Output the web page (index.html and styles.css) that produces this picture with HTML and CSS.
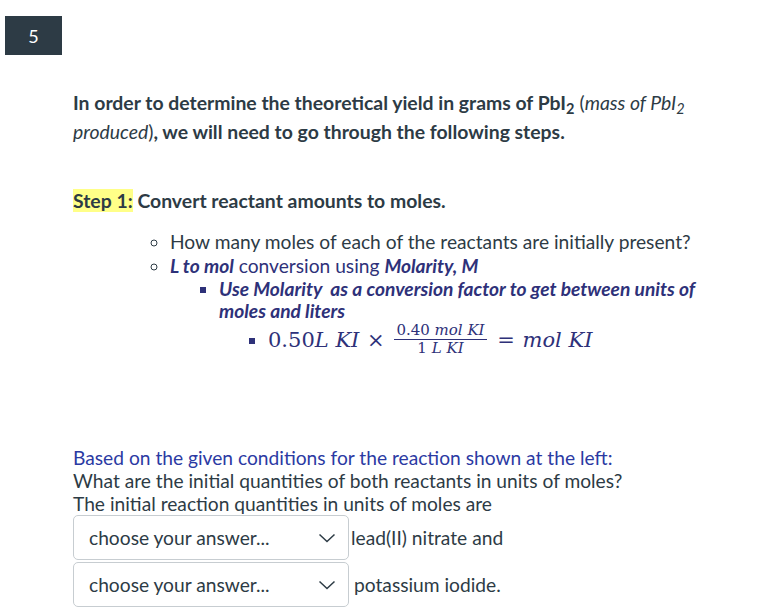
FILE: index.html
```html
<!DOCTYPE html>
<html>
<head>
<meta charset="utf-8">
<link rel="stylesheet" href="styles.css">
</head>
<body>
<div class="badge">5</div>
<div class="content">
  <p class="intro"><strong>In order to determine the theoretical yield in grams of PbI<sub>2</sub></strong> (<em>mass of PbI<sub>2</sub> produced</em>)<strong>, we will need to go through the following steps.</strong></p>
  <p class="step"><span class="hl">Step 1:</span> Convert reactant amounts to moles.</p>
  <ul class="l1">
    <li>How many moles of each of the reactants are initially present?</li>
    <li><strong class="navy"><em>L to mol</em></strong> <span class="navy">conversion using</span> <strong class="navy"><em>Molarity, M</em></strong>
      <ul class="l2">
        <li><strong><em>Use Molarity&nbsp; as a conversion factor to get between units of moles and liters</em></strong>
          <ul class="l3">
            <li><span class="math"><span class="rm">0.50</span><span class="it">L</span> <span class="it">KI</span> <span class="op">×</span> <span class="frac"><span class="num"><span class="rm">0.40</span> <span class="it">mol</span> <span class="it">KI</span></span><span class="den"><span class="rm">1</span> <span class="it">L</span> <span class="it">KI</span></span></span> <span class="op">=</span> <span class="it">mol</span> <span class="it">KI</span></span></li>
          </ul>
        </li>
      </ul>
    </li>
  </ul>
  <div class="question">
    <div class="blue">Based on the given conditions for the reaction shown at the left:</div>
    <div>What are the initial quantities of both reactants in units of moles?</div>
    <div>The initial reaction quantities in units of moles are</div>
    <div class="row first">
      <div class="select"><span>choose your answer...</span><svg width="18" height="10" viewBox="0 0 18 10"><polyline points="1.5,1.5 9,8.5 16.5,1.5" fill="none" stroke="#2d3b45" stroke-width="1.5"/></svg></div>
      <span class="after">lead(II) nitrate and</span>
    </div>
    <div class="row">
      <div class="select"><span>choose your answer...</span><svg width="18" height="10" viewBox="0 0 18 10"><polyline points="1.5,1.5 9,8.5 16.5,1.5" fill="none" stroke="#2d3b45" stroke-width="1.5"/></svg></div>
      <span class="after after2">potassium iodide.</span>
    </div>
  </div>
</div>
</body>
</html>
```
FILE: styles.css
```css
body {
  margin: 0;
  font-family: Lato, "Noto Sans", sans-serif;
  color: #2d3b45;
  font-size: 19.2px;
  background: #fff;
}
.badge {
  margin: 16px 0 0 5px;
  width: 57px;
  height: 39px;
  background: #2d3b45;
  color: #fff;
  font-size: 18px;
  display: flex;
  align-items: center;
  justify-content: center;
}
.content {
  padding-left: 73px;
  width: 640px;
}
.intro {
  margin: 33px 0 0;
  line-height: 29px;
  font-size: 19.4px;
}
.intro strong { font-weight: 700; }
.intro em { font-weight: 400; }
sub {
  font-size: 75%;
  line-height: 0;
  vertical-align: -0.3em;
}
.step {
  margin: 42px 0 0;
  font-weight: 700;
  line-height: 26px;
  font-size: 19.4px;
}
.hl { background: #ffff88; }
.navy { color: #2e3179; }
ul { margin: 0; }
.l1 {
  list-style-type: circle;
  padding-left: 97px;
  margin-top: 16px;
  line-height: 24px;
  width: 560px;
}
.l2 {
  list-style-type: square;
  padding-left: 49px;
  color: #2e3179;
  line-height: 22px;
}
.l3 {
  list-style-type: square;
  padding-left: 49px;
  color: #2e3179;
  margin-top: 2px;
}
.l3 li { line-height: 30px; }
.math {
  font-family: "DejaVu Serif", "Liberation Serif", serif;
  font-size: 21px;
  font-weight: 400;
  font-style: normal;
}
.math .it { font-style: italic; }
.math .op { margin: 0 1px; }
.frac {
  display: inline-flex;
  flex-direction: column;
  align-items: center;
  vertical-align: middle;
  font-size: 15px;
  margin: 0 3px 0 2px;
  position: relative;
  top: -2px;
}
.num {
  border-bottom: 1px solid #2e3179;
  padding: 0 2px;
  line-height: 17px;
}
.den {
  line-height: 17px;
}
.question {
  margin-top: 87px;
  line-height: 23px;
  width: 690px;
}
.blue { color: #2b3aa3; }
.row {
  display: flex;
  align-items: center;
  margin-top: 2px;
}
.row.first { margin-top: 0; }
.select {
  box-sizing: border-box;
  width: 276px;
  height: 45px;
  border: 1px solid #c7cdd1;
  border-radius: 5px;
  display: flex;
  align-items: center;
  justify-content: space-between;
  padding: 0 12px 0 15px;
}
.after { margin-left: 2px; }
.after2 { margin-left: 5px; }
```
